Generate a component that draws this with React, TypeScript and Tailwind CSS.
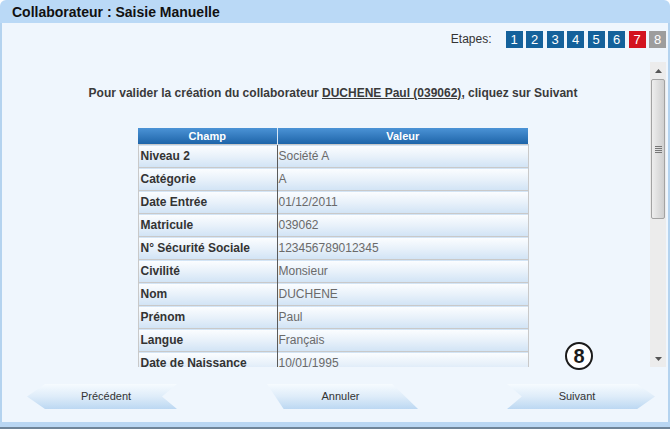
const steps: { n: number; tone: "done" | "current" | "todo" }[] = [
  { n: 1, tone: "done" },
  { n: 2, tone: "done" },
  { n: 3, tone: "done" },
  { n: 4, tone: "done" },
  { n: 5, tone: "done" },
  { n: 6, tone: "done" },
  { n: 7, tone: "current" },
  { n: 8, tone: "todo" },
];

const toneClass = {
  done: "bg-[#14619b]",
  current: "bg-[#d3131f]",
  todo: "bg-[#9d9d9d]",
};

const rows: [string, string][] = [
  ["Niveau 2", "Société A"],
  ["Catégorie", "A"],
  ["Date Entrée", "01/12/2011"],
  ["Matricule", "039062"],
  ["N° Sécurité Sociale", "123456789012345"],
  ["Civilité", "Monsieur"],
  ["Nom", "DUCHENE"],
  ["Prénom", "Paul"],
  ["Langue", "Français"],
  ["Date de Naissance", "10/01/1995"],
];

function Scrollbar() {
  return (
    <div className="flex h-full w-[16px] flex-col bg-[#ececec]">
      {/* up arrow */}
      <div className="flex h-[17px] items-center justify-center">
        <svg width="7" height="4" viewBox="0 0 7 4">
          <path d="M0 4 L3.5 0 L7 4 Z" fill="#555" />
        </svg>
      </div>
      {/* thumb */}
      <div className="mx-[1px] flex h-[140px] items-center justify-center rounded-[2px] border border-[#a3a3a3] bg-gradient-to-r from-[#eeeeee] to-[#cfcfcf]">
        <svg width="7" height="7" viewBox="0 0 7 7">
          <path d="M0 0.5 H7 M0 2.5 H7 M0 4.5 H7 M0 6.5 H7" stroke="#777" strokeWidth="1" />
        </svg>
      </div>
      <div className="flex-1" />
      {/* down arrow */}
      <div className="flex h-[17px] items-center justify-center">
        <svg width="7" height="4" viewBox="0 0 7 4">
          <path d="M0 0 L3.5 4 L7 0 Z" fill="#555" />
        </svg>
      </div>
    </div>
  );
}

export default function App() {
  return (
    <div className="relative flex h-[429px] w-[670px] flex-col overflow-hidden bg-white font-['Liberation_Sans',Arial,sans-serif]">
      {/* Title bar */}
      <div className="h-[23px] shrink-0 rounded-t-[6px] bg-[#bad9f6] pl-[12px] text-[14px] font-bold leading-[24px] text-[#111]">
        Collaborateur : Saisie Manuelle
      </div>

      {/* Body */}
      <div className="flex min-h-0 flex-1 flex-col border-x-2 border-[#b4d3ef] bg-[#eff6fd]">
        {/* Steps */}
        <div className="flex h-[39px] shrink-0 items-start justify-end pr-[2px] pt-[8px]">
          <span className="mr-[14px] text-[12px] leading-[17px] text-[#333]">Etapes:</span>
          <div className="flex gap-[3.5px]">
            {steps.map((s) => (
              <div
                key={s.n}
                className={`flex h-[17px] w-[17px] items-center justify-center text-[13px] leading-none text-white ${toneClass[s.tone]}`}
              >
                {s.n}
              </div>
            ))}
          </div>
        </div>

        {/* Scroll area */}
        <div className="flex h-[305px] shrink-0">
          <div className="w-[648px] overflow-hidden pl-[14px]">
            <p className="pt-[24px] text-center text-[12px] font-bold leading-[14px] text-[#3a3a3a]">
              Pour valider la création du collaborateur <span className="underline">DUCHENE Paul (039062)</span>, cliquez sur Suivant
            </p>

            <table className="mx-auto mt-[28px] w-[391px] table-fixed border-collapse text-[12px]">
              <colgroup>
                <col className="w-[139px]" />
                <col />
              </colgroup>
              <thead>
                <tr className="h-[16px] bg-gradient-to-b from-[#4b93d6] to-[#1a62a6] text-[11px] font-bold text-white">
                  <th className="border-r border-[#d7e7f6] p-0 leading-[16px]">Champ</th>
                  <th className="p-0 leading-[16px]">Valeur</th>
                </tr>
              </thead>
              <tbody>
                {rows.map(([label, value]) => (
                  <tr
                    key={label}
                    className="h-[23px] border border-[#c9c9c9] bg-gradient-to-b from-[#fbfdff] via-[#e8f1fa] to-[#d2e4f5]"
                  >
                    <td className="border-r border-[#5a5a5a] py-0 pl-[2px] text-left font-bold leading-[22px] text-[#333]">
                      {label}
                    </td>
                    <td className="py-0 pl-[1px] text-left leading-[22px] text-[#6a6a6a]">{value}</td>
                  </tr>
                ))}
              </tbody>
            </table>
          </div>
          <Scrollbar />
        </div>

        {/* Buttons */}
        <div className="flex flex-1 items-start pt-[17px] text-[11px] text-[#333]">
          <div className="ml-[25px] flex h-[25px] w-[150px] items-center justify-center bg-gradient-to-b from-[#f6fbff] via-[#deecf9] to-[#bcd8f2] pl-[8px] [clip-path:polygon(0_50%,12%_0,100%_0,90%_50%,100%_100%,12%_100%)]">
            Précédent
          </div>
          <div className="ml-[90px] flex h-[25px] w-[151px] items-center justify-center bg-gradient-to-b from-[#f6fbff] via-[#deecf9] to-[#bcd8f2] pr-[4px] [clip-path:polygon(0_0,83%_0,100%_100%,11%_100%)]">
            Annuler
          </div>
          <div className="ml-[89px] flex h-[25px] w-[148px] items-center justify-center bg-gradient-to-b from-[#f6fbff] via-[#deecf9] to-[#bcd8f2] pr-[8px] [clip-path:polygon(0_0,88%_0,100%_50%,88%_100%,0_100%,10%_50%)]">
            Suivant
          </div>
        </div>
      </div>

      {/* Bottom edge */}
      <div className="h-[7px] shrink-0 border-b-2 border-[#6f8498] bg-[#b9d6f2]" />

      {/* Annotation marker */}
      <div className="absolute left-[565px] top-[342px] flex h-[28px] w-[28px] items-center justify-center rounded-full border-[2.5px] border-[#1b1b1b] bg-white text-[20px] font-bold leading-none text-[#1b1b1b]">
        8
      </div>
    </div>
  );
}
